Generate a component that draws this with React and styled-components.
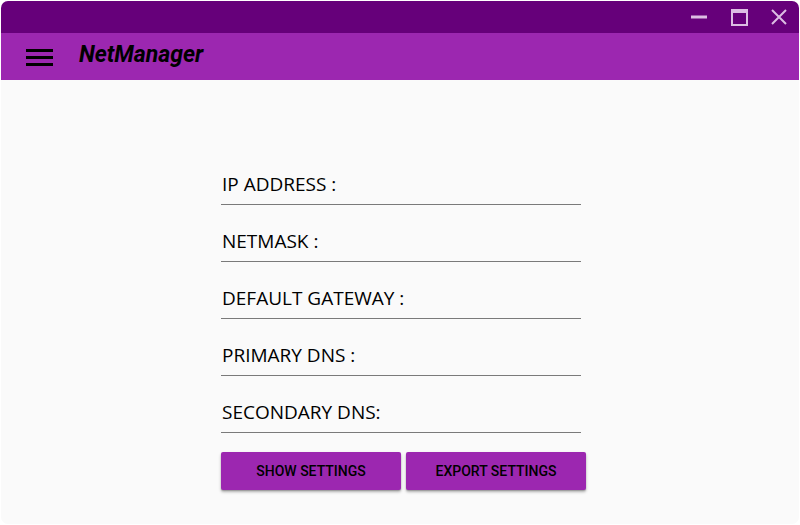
import React from "react";
import styled, { createGlobalStyle } from "styled-components";

const Global = createGlobalStyle`
  html, body { margin: 0; padding: 0; background: #ffffff; }
  body { font-family: "Open Sans", "Noto Sans", sans-serif; }
  * { box-sizing: border-box; }
`;

const Window = styled.div`
  margin: 1px;
  width: 798px;
  height: 523px;
  border-radius: 7px;
  overflow: hidden;
  background: #fafafa;
  display: flex;
  flex-direction: column;
`;

const TitleBar = styled.div`
  height: 32px;
  background: #66007a;
  display: flex;
  justify-content: flex-end;
  align-items: center;
  padding-right: 0;
`;

const WinButton = styled.button`
  width: 40px;
  height: 32px;
  border: none;
  background: transparent;
  padding: 0;
  display: flex;
  align-items: center;
  justify-content: center;
  svg { display: block; }
`;

const AppBar = styled.div`
  height: 47px;
  background: #9c27b0;
  display: flex;
  align-items: center;
  padding-left: 25px;
  gap: 25px;
`;

const Title = styled.div`
  font-family: Roboto, "Liberation Sans", sans-serif;
  font-weight: 700;
  font-style: italic;
  font-size: 23px;
  line-height: 28px;
  margin-top: -3px;
  color: #000;
`;

const Content = styled.div`
  flex: 1;
  display: flex;
  padding-top: 68px;
  padding-left: 220px;
`;

const Form = styled.div`
  width: 360px;
  display: flex;
  flex-direction: column;
`;

const Field = styled.div`
  height: 57px;
  border-bottom: 1px solid #7a7a7a;
  display: flex;
  align-items: flex-end;
  padding: 0 0 7px 1px;
  font-size: 19px;
  line-height: 26px;
  color: #000;
`;

const Buttons = styled.div`
  display: flex;
  gap: 5px;
  margin-top: 19px;
`;

const Button = styled.button`
  flex-shrink: 0;
  width: 180px;
  height: 38px;
  border: none;
  border-radius: 2px;
  background: #9c27b0;
  color: #000;
  font-family: Roboto, "Liberation Sans", sans-serif;
  font-weight: 500;
  font-size: 14px;
  text-transform: uppercase;
  box-shadow: 0 2px 3px rgba(0,0,0,0.3), 0 1px 1px rgba(0,0,0,0.15);
  padding: 0;
`;

const iconColor = "#dcbde3";

export default function App() {
  const fields = ["IP ADDRESS :", "NETMASK :", "DEFAULT GATEWAY :", "PRIMARY DNS :", "SECONDARY DNS:"];
  return (
    <>
      <Global />
      <Window>
        <TitleBar>
          <WinButton aria-label="minimize">
            <svg width="16" height="16" viewBox="0 0 16 16">
              <rect x="0" y="6.5" width="16" height="3" fill={iconColor} />
            </svg>
          </WinButton>
          <WinButton aria-label="maximize">
            <svg width="17" height="17" viewBox="0 0 17 17">
              <rect x="1" y="1" width="15" height="15" fill="none" stroke={iconColor} strokeWidth="2" />
              <rect x="1" y="1" width="15" height="3" fill={iconColor} />
            </svg>
          </WinButton>
          <WinButton aria-label="close">
            <svg width="16" height="16" viewBox="0 0 16 16">
              <path d="M1 1 L15 15 M15 1 L1 15" stroke={iconColor} strokeWidth="2" />
            </svg>
          </WinButton>
        </TitleBar>
        <AppBar>
          <svg width="28" height="20" viewBox="0 0 28 20">
            <rect x="0" y="2" width="27" height="3" fill="#000" />
            <rect x="0" y="9" width="27" height="3" fill="#000" />
            <rect x="0" y="16" width="27" height="3" fill="#000" />
          </svg>
          <Title>NetManager</Title>
        </AppBar>
        <Content>
          <Form>
            {fields.map((f) => (
              <Field key={f}>{f}</Field>
            ))}
            <Buttons>
              <Button>Show Settings</Button>
              <Button>Export Settings</Button>
            </Buttons>
          </Form>
        </Content>
      </Window>
    </>
  );
}
